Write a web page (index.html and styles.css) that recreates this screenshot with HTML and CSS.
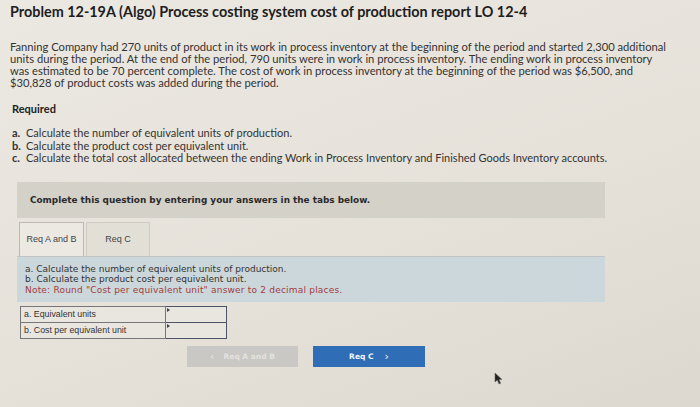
FILE: index.html
```html
<!DOCTYPE html>
<html>
<head>
<meta charset="utf-8">
<link rel="stylesheet" href="styles.css">
</head>
<body>
<div class="page">
  <h1 class="title">Problem 12-19A (Algo) Process costing system cost of production report LO 12-4</h1>
  <p class="para">Fanning Company had 270 units of product in its work in process inventory at the beginning of the period and started 2,300 additional<br>units during the period. At the end of the period, 790 units were in work in process inventory. The ending work in process inventory<br>was estimated to be 70 percent complete. The cost of work in process inventory at the beginning of the period was $6,500, and<br>$30,828 of product costs was added during the period.</p>
  <h2 class="required">Required</h2>
  <ul class="tasks">
    <li><span class="mark">a.</span>Calculate the number of equivalent units of production.</li>
    <li><span class="mark">b.</span>Calculate the product cost per equivalent unit.</li>
    <li><span class="mark">c.</span>Calculate the total cost allocated between the ending Work in Process Inventory and Finished Goods Inventory accounts.</li>
  </ul>
  <div class="question">
    <div class="banner">Complete this question by entering your answers in the tabs below.</div>
    <div class="tabs">
      <div class="tab active">Req A and B</div>
      <div class="tab">Req C</div>
    </div>
    <div class="panel">
      <div>a. Calculate the number of equivalent units of production.</div>
      <div>b. Calculate the product cost per equivalent unit.</div>
      <div class="note">Note: Round "Cost per equivalent unit" answer to 2 decimal places.</div>
    </div>
    <table class="answers">
      <tr><td class="label">a. Equivalent units</td><td class="input"><span class="flag"></span></td></tr>
      <tr><td class="label">b. Cost per equivalent unit</td><td class="input"><span class="flag"></span></td></tr>
    </table>
    <div class="nav">
      <div class="btn prev"><span class="chev">&lsaquo;</span>Req A and B</div>
      <div class="btn next">Req C<span class="chev">&rsaquo;</span></div>
    </div>
  </div>
  <svg class="cursor" width="9" height="13" viewBox="0 0 9 13"><path d="M1 1 L1 10 L3.3 8 L5 12 L6.6 11.3 L5 7.5 L8 7.5 Z" fill="#222" stroke="#666" stroke-width="0.6"/></svg>
</div>
</body>
</html>
```
FILE: styles.css
```css
* { box-sizing: border-box; }
html, body { margin: 0; padding: 0; }
body {
  width: 700px;
  height: 407px;
  overflow: hidden;
  background: linear-gradient(160deg, #ebe8e2 0%, #e6e2da 55%, #ddd8cf 100%);
  font-family: Lato, "Liberation Sans", sans-serif;
  color: #2c2c2c;
}
.page {
  position: relative;
  height: 407px;
  padding: 3px 0 0 10px;
}
.title {
  margin: 0;
  font-size: 14.4px;
  line-height: 17px;
  font-weight: 700;
  color: #1e1e1e;
}
.para {
  margin: 21px 0 0;
  white-space: nowrap;
  font-size: 11.2px;
  line-height: 12px;
  color: #333;
}
.required {
  margin: 14px 0 0 2px;
  font-size: 11px;
  line-height: 12px;
  font-weight: 700;
  color: #222;
}
.tasks {
  list-style: none;
  margin: 12px 0 0 2px;
  padding: 0;
  font-size: 11px;
  line-height: 12.5px;
  color: #333;
}
.tasks .mark {
  display: inline-block;
  width: 14px;
  font-weight: 700;
}
.question {
  margin: 17px 0 0 7px;
  width: 588px;
}
.banner {
  height: 36px;
  background: #d4d1c9;
  padding: 0 0 0 13px;
  display: flex;
  align-items: center;
  font-family: "DejaVu Sans", Verdana, sans-serif;
  font-weight: 700;
  font-size: 8.9px;
  color: #2a2a2a;
}
.tabs {
  display: flex;
  gap: 2px;
  margin: 4px 0 0 2px;
}
.tab {
  height: 34px;
  display: flex;
  align-items: center;
  justify-content: center;
  font-family: "Liberation Sans", Arial, sans-serif;
  font-size: 9px;
  color: #444;
  background: #e2dfd7;
  border: 1px solid #cfcbc3;
  border-bottom: none;
}
.tab.active {
  width: 65px;
  background: #ece9e3;
  border-color: #bdb9b1;
}
.tab:not(.active) { width: 64px; }
.panel {
  height: 46px;
  background: #ccd7db;
  border-top: 1px solid #c0c4c4;
  padding: 7px 0 0 8px;
  font-family: "DejaVu Sans", Verdana, sans-serif;
  font-size: 9px;
  line-height: 10.5px;
  color: #333;
}
.panel .note { color: #a23c3c; letter-spacing: 0.2px; }
.answers {
  margin: 4px 0 0 3px;
  border-collapse: collapse;
  font-family: "Liberation Sans", Arial, sans-serif;
  font-size: 8.8px;
  color: #333;
  background: #e9e6df;
}
.answers td {
  height: 16px;
  padding: 0;
  border: 1px solid #77777a;
}
.answers .label {
  width: 145px;
  padding-left: 3px;
}
.answers .input {
  width: 61px;
  border: 1.5px solid #4d5264;
  position: relative;
  vertical-align: top;
}
.flag {
  position: absolute;
  left: 1px;
  top: 1px;
  width: 0;
  height: 0;
  border-top: 2px solid transparent;
  border-bottom: 2px solid transparent;
  border-left: 3px solid #3c4050;
}
.nav {
  display: flex;
  gap: 15px;
  margin: 7px 0 0 170px;
}
.btn {
  height: 21px;
  display: flex;
  align-items: center;
  justify-content: center;
  font-family: "DejaVu Sans", Verdana, sans-serif;
  font-size: 7.5px;
  font-weight: 700;
}
.btn.prev {
  width: 111px;
  background: #cac8c4;
  color: #e4e2de;
}
.btn.prev .chev { margin-right: 9px; font-size: 11px; font-weight: 400; }
.btn.next {
  width: 112px;
  background: #2f6db6;
  color: #f4f7fb;
}
.btn.next .chev { margin-left: 11px; font-size: 11px; font-weight: 400; }
.cursor {
  position: absolute;
  left: 494px;
  top: 372px;
}
```
